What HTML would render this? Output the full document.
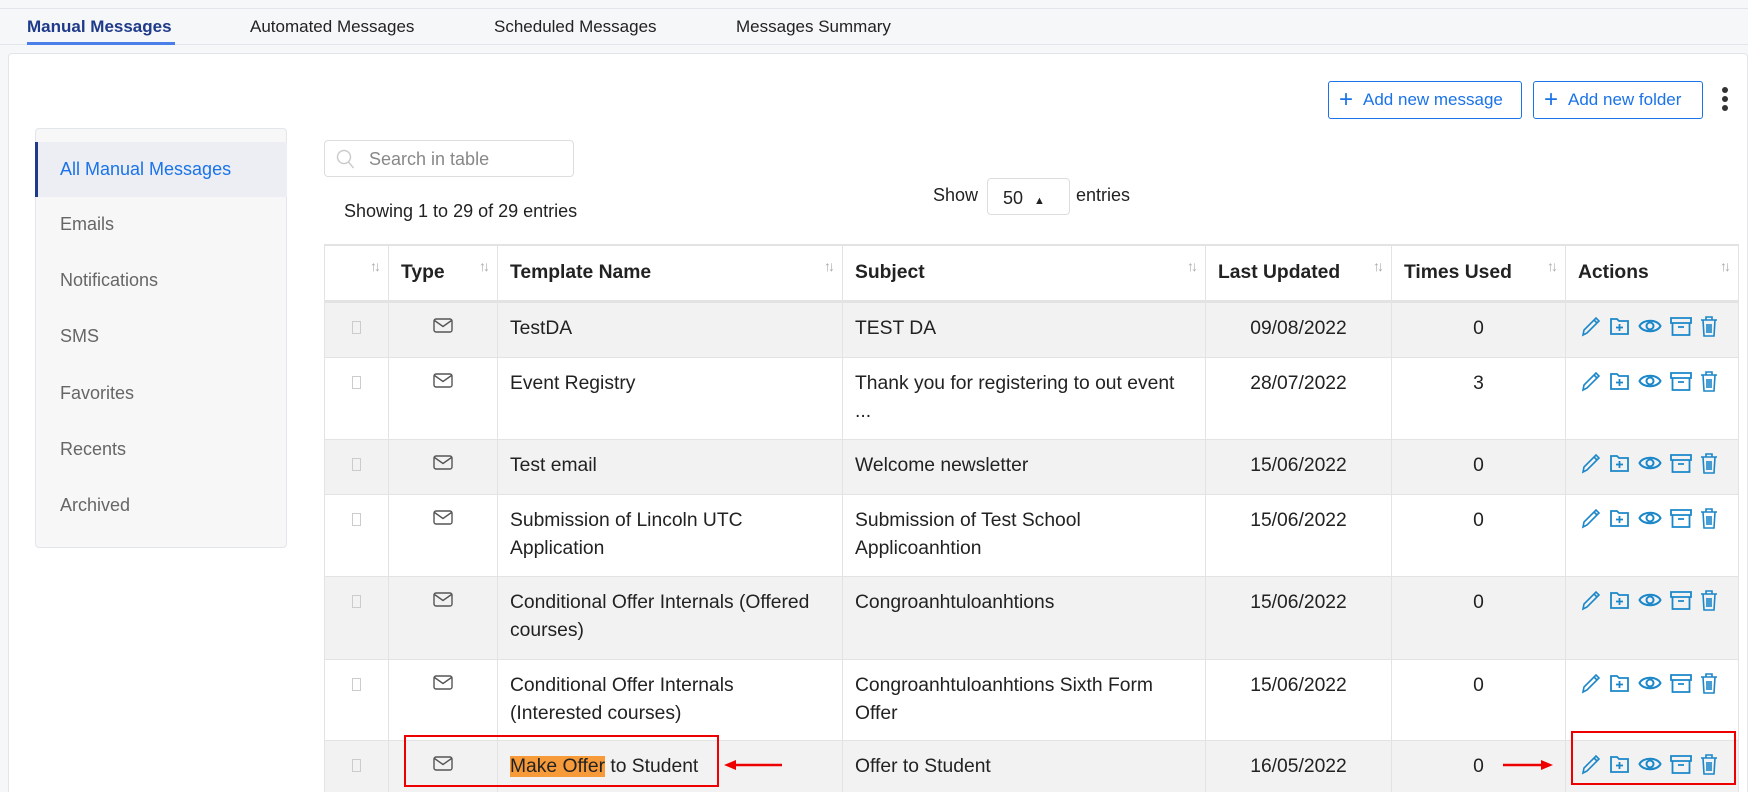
<!DOCTYPE html>
<html><head><meta charset="utf-8"><style>
*{box-sizing:border-box;margin:0;padding:0}
html,body{width:1748px;height:792px;overflow:hidden}
body{background:#f6f7f9;font-family:"Liberation Sans",sans-serif;color:#222;position:relative}
.abs{position:absolute}
.tabbar{left:0;top:8px;width:1748px;height:37px;border-top:1px solid #e2e5ea;border-bottom:1px solid #e2e5ea;background:#f6f7f9}
.tab{top:17px;font-size:17px;color:#222}
.card{left:8px;top:53px;width:1740px;height:739px;background:#fff;border:1px solid #e2e5ea;border-bottom:none;border-radius:4px 4px 0 0}
.btn{top:81px;height:38px;border:1px solid #1a73e8;border-radius:3px;color:#1a73e8;font-size:17px;line-height:36px;padding-left:10px;background:#fff}
.btn b{font-weight:normal;font-size:24px;vertical-align:-2px;margin-right:10px}
.side{left:35px;top:128px;width:252px;height:420px;background:#f7f7f7;border:1px solid #e2e5ea;border-radius:4px}
.si{left:60px;font-size:18px;color:#666}
table{position:absolute;left:324px;top:244px;width:1415px;border-collapse:collapse;font-size:19.3px}
td,th{border-right:1px solid #e3e3e3;vertical-align:top;padding:0 12px;position:relative;text-align:left}
th{height:56px;font-weight:bold;vertical-align:middle;border-top:2px solid #e3e3e3;border-bottom:3px solid #e3e3e3}
th:first-child,td:first-child{border-left:1px solid #e3e3e3}
td{padding-top:12px;line-height:28px;border-bottom:1px solid #e3e3e3}
tr.g td{background:#f2f2f2}
.srt{position:absolute;right:10px;top:12px;color:#aaa;font-size:14px;font-weight:bold;letter-spacing:-3px}
.c{text-align:center}
.chk{display:inline-block;width:9px;height:13px;border:1px solid #ccc;margin-top:6px}
.ic svg{margin-right:8px;vertical-align:-3px}
</style></head><body>
<div class="abs tabbar"></div>
<div class="abs tab" style="left:27px;color:#1f3a8a;font-weight:bold">Manual Messages</div>
<div class="abs" style="left:27px;top:42px;width:148px;height:3px;background:#4a7ee8"></div>
<div class="abs tab" style="left:250px">Automated Messages</div>
<div class="abs tab" style="left:494px">Scheduled Messages</div>
<div class="abs tab" style="left:736px">Messages Summary</div>
<div class="abs card"></div>
<div class="abs btn" style="left:1328px;width:194px"><b>+</b>Add new message</div>
<div class="abs btn" style="left:1533px;width:170px"><b>+</b>Add new folder</div>
<div class="abs" style="left:1722px;top:87px;width:6px;height:6px;border-radius:3px;background:#333;box-shadow:0 9px 0 #333,0 18px 0 #333"></div>
<div class="abs side"></div>
<div class="abs" style="left:35px;top:142px;width:252px;height:55px;background:#eceef3;border-left:3px solid #1f3a8a"></div>
<div class="abs si" style="top:159px;color:#1a73e8">All Manual Messages</div>
<div class="abs si" style="top:214px">Emails</div>
<div class="abs si" style="top:270px">Notifications</div>
<div class="abs si" style="top:326px">SMS</div>
<div class="abs si" style="top:383px">Favorites</div>
<div class="abs si" style="top:439px">Recents</div>
<div class="abs si" style="top:495px">Archived</div>
<div class="abs" style="left:324px;top:140px;width:250px;height:37px;border:1px solid #ddd;border-radius:4px"></div>
<svg class="abs" style="left:336px;top:149px" width="20" height="22" viewBox="0 0 20 22"><circle cx="8" cy="8" r="6.5" fill="none" stroke="#ccc" stroke-width="1.5"/><path d="M12.5 13l5 6" stroke="#ccc" stroke-width="1.5"/></svg>
<div class="abs" style="left:369px;top:149px;font-size:18px;color:#888">Search in table</div>
<div class="abs" style="left:344px;top:201px;font-size:18px">Showing 1 to 29 of 29 entries</div>
<div class="abs" style="left:933px;top:185px;font-size:18px">Show</div>
<div class="abs" style="left:987px;top:178px;width:83px;height:37px;border:1px solid #ddd;border-radius:4px;font-size:18px;padding:9px 15px">50 <span style="font-size:11px;margin-left:6px">&#9650;</span></div>
<div class="abs" style="left:1076px;top:185px;font-size:18px">entries</div>
<svg width="0" height="0" style="position:absolute"><defs>
<g id="mail"><rect x="1" y="2" width="18" height="13" rx="2" fill="none" stroke="#555" stroke-width="1.4"/><path d="M1.5 3.5l8.5 6 8.5-6" fill="none" stroke="#555" stroke-width="1.4"/></g>
</defs></svg>
<table>
<tr><th style="width:64px"><span class="srt">↑↓</span></th><th style="width:109px">Type<span class="srt">↑↓</span></th><th style="width:345px">Template Name<span class="srt">↑↓</span></th><th style="width:363px">Subject<span class="srt">↑↓</span></th><th style="width:186px">Last Updated<span class="srt">↑↓</span></th><th style="width:174px">Times Used<span class="srt">↑↓</span></th><th>Actions<span class="srt">↑↓</span></th></tr>
<tr class="g" style="height:56px"><td class="c"><span class="chk"></span></td><td class="c"><svg width="20" height="17"><use href="#mail"/></svg></td><td>TestDA</td><td>TEST DA</td><td class="c">09/08/2022</td><td class="c">0</td><td class="ic">ICONS</td></tr>
<tr style="height:82px"><td class="c"><span class="chk"></span></td><td class="c"><svg width="20" height="17"><use href="#mail"/></svg></td><td>Event Registry</td><td>Thank you for registering to out event ...</td><td class="c">28/07/2022</td><td class="c">3</td><td class="ic">ICONS</td></tr>
<tr class="g" style="height:55px"><td class="c"><span class="chk"></span></td><td class="c"><svg width="20" height="17"><use href="#mail"/></svg></td><td>Test email</td><td>Welcome newsletter</td><td class="c">15/06/2022</td><td class="c">0</td><td class="ic">ICONS</td></tr>
<tr style="height:82px"><td class="c"><span class="chk"></span></td><td class="c"><svg width="20" height="17"><use href="#mail"/></svg></td><td>Submission of Lincoln UTC Application</td><td>Submission of Test School Applicoanhtion</td><td class="c">15/06/2022</td><td class="c">0</td><td class="ic">ICONS</td></tr>
<tr class="g" style="height:83px"><td class="c"><span class="chk"></span></td><td class="c"><svg width="20" height="17"><use href="#mail"/></svg></td><td>Conditional Offer Internals (Offered courses)</td><td>Congroanhtuloanhtions</td><td class="c">15/06/2022</td><td class="c">0</td><td class="ic">ICONS</td></tr>
<tr style="height:81px"><td class="c"><span class="chk"></span></td><td class="c"><svg width="20" height="17"><use href="#mail"/></svg></td><td>Conditional Offer Internals (Interested courses)</td><td>Congroanhtuloanhtions Sixth Form Offer</td><td class="c">15/06/2022</td><td class="c">0</td><td class="ic">ICONS</td></tr>
<tr class="g" style="height:70px"><td class="c"><span class="chk"></span></td><td class="c"><svg width="20" height="17"><use href="#mail"/></svg></td><td><span style="background:#f79a3a">Make Offer</span> to Student</td><td>Offer to Student</td><td class="c">16/05/2022</td><td class="c">0</td><td class="ic">ICONS</td></tr>
</table>
<div class="abs" style="left:404px;top:735px;width:315px;height:52px;border:2px solid #e00"></div>
<div class="abs" style="left:1571px;top:731px;width:165px;height:54px;border:2px solid #e00"></div>
<svg class="abs" style="left:722px;top:758px" width="62" height="14"><path d="M60 7H12" stroke="#e00" stroke-width="2.5"/><path d="M2 7l12-5v10z" fill="#e00"/></svg>
<svg class="abs" style="left:1503px;top:758px" width="52" height="14"><path d="M0 7h40" stroke="#e00" stroke-width="2.5"/><path d="M50 7l-12-5v10z" fill="#e00"/></svg>
<script>
var s='<svg width="22" height="22" viewBox="0 0 22 22" fill="none" stroke="#1b87c9" stroke-width="1.6"><path d="M3 20l1-5L16 3l3 3L7 18z M14 5l3 3"/></svg>'+
'<svg width="20" height="22" viewBox="0 0 20 22" fill="none" stroke="#1b87c9" stroke-width="1.8"><path d="M1 4h6l2 2h9v13H1z M9.5 9v7 M6 12.5h7"/></svg>'+
'<svg width="24" height="22" viewBox="0 0 24 22" fill="none" stroke="#1b87c9" stroke-width="2"><path d="M1.5 11C5 4 19 4 22.5 11 19 18 5 18 1.5 11z"/><circle cx="12" cy="11" r="3.5"/></svg>'+
'<svg width="22" height="22" viewBox="0 0 22 22" fill="none" stroke="#1b87c9" stroke-width="1.8"><path d="M1 3h20v5H1z M2.5 8v12h17V8 M8 12h6"/></svg>'+
'<svg width="18" height="22" viewBox="0 0 18 22" fill="none" stroke="#1b87c9" stroke-width="1.6"><path d="M1 5h16 M6 5V2h6v3 M3 5l1 16h10l1-16 M7 9v9 M9 9v9 M11 9v9"/></svg>';
document.querySelectorAll('.ic').forEach(function(e){e.innerHTML=s;e.style.paddingLeft='14px';e.style.whiteSpace='nowrap'});
</script>
</body></html>
